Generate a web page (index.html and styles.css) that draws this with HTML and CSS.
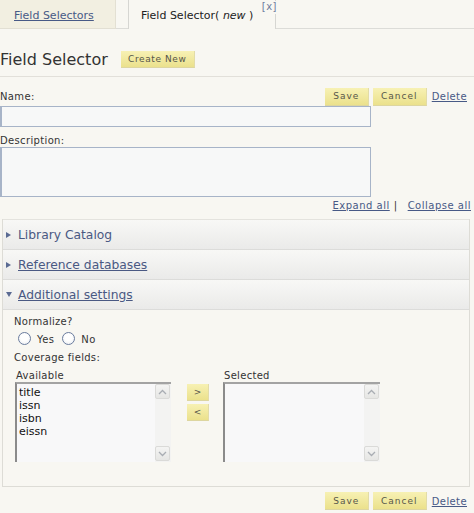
FILE: index.html
```html
<!DOCTYPE html>
<html>
<head>
<meta charset="utf-8">
<title>Field Selector</title>
<link rel="stylesheet" href="styles.css">
</head>
<body>
<div class="tabs">
  <div class="tab tab-off"><a href="#">Field Selectors</a></div>
  <div class="tab-gap"></div>
  <div class="tab tab-on">Field Selector( <i>new</i> )<span class="close">[x]</span></div>
  <div class="tab-rest"></div>
</div>

<div class="title-row">
  <h1>Field Selector</h1>
  <button class="btn btn-create">Create New</button>
</div>
<div class="rule"></div>

<div class="label-row">
  <label class="lbl">Name:</label>
  <div class="actions">
    <button class="btn btn-save">Save</button>
    <button class="btn btn-cancel">Cancel</button>
    <a href="#" class="del">Delete</a>
  </div>
</div>
<input class="text-input" type="text">

<label class="lbl desc-label">Description:</label>
<textarea class="text-area"></textarea>

<div class="expand">
  <a href="#">Expand all</a><span class="sep">|</span><a href="#">Collapse all</a>
</div>

<div class="accordion">
  <div class="acc-head"><span class="tri-r"></span><span class="acc-title">Library Catalog</span></div>
  <div class="acc-head"><span class="tri-r"></span><a href="#" class="acc-title">Reference databases</a></div>
  <div class="acc-head"><span class="tri-d"></span><a href="#" class="acc-title">Additional settings</a></div>
  <div class="acc-body">
    <div class="small-lbl">Normalize?</div>
    <div class="radios">
      <span class="radio"></span><span class="radio-lbl">Yes</span>
      <span class="radio"></span><span class="radio-lbl">No</span>
    </div>
    <div class="small-lbl cov">Coverage fields:</div>
    <div class="pickers">
      <div class="pick-col col-avail">
        <div class="small-lbl pick-lbl">Available</div>
        <div class="listbox">
          <ul class="items">
            <li>title</li>
            <li>issn</li>
            <li>isbn</li>
            <li>eissn</li>
          </ul>
          <div class="scrollbar">
            <span class="sb-btn"><svg width="9" height="6" viewBox="0 0 9 6"><path d="M1 5 L4.5 1.5 L8 5" fill="none" stroke="#a9adb3" stroke-width="1.3"/></svg></span>
            <span class="sb-btn"><svg width="9" height="6" viewBox="0 0 9 6"><path d="M1 1 L4.5 4.5 L8 1" fill="none" stroke="#a9adb3" stroke-width="1.3"/></svg></span>
          </div>
        </div>
      </div>
      <div class="move-col">
        <button class="btn btn-move">&gt;</button>
        <button class="btn btn-move">&lt;</button>
      </div>
      <div class="pick-col col-sel">
        <div class="small-lbl pick-lbl">Selected</div>
        <div class="listbox">
          <ul class="items"></ul>
          <div class="scrollbar">
            <span class="sb-btn"><svg width="9" height="6" viewBox="0 0 9 6"><path d="M1 5 L4.5 1.5 L8 5" fill="none" stroke="#a9adb3" stroke-width="1.3"/></svg></span>
            <span class="sb-btn"><svg width="9" height="6" viewBox="0 0 9 6"><path d="M1 1 L4.5 4.5 L8 1" fill="none" stroke="#a9adb3" stroke-width="1.3"/></svg></span>
          </div>
        </div>
      </div>
    </div>
  </div>
</div>

<div class="actions bottom-actions">
  <button class="btn btn-save">Save</button>
  <button class="btn btn-cancel">Cancel</button>
  <a href="#" class="del">Delete</a>
</div>
</body>
</html>
```

FILE: styles.css
```css
html, body {
  margin: 0;
  padding: 0;
}
body {
  width: 474px;
  height: 513px;
  overflow: hidden;
  background: #f8f7f2;
  font-family: "DejaVu Sans", Verdana, sans-serif;
  color: #333;
}
a {
  color: #485a86;
  text-decoration: underline;
}

/* tabs */
.tabs {
  display: flex;
  height: 29px;
}
.tab {
  box-sizing: border-box;
  height: 29px;
  padding-top: 9px;
  font-size: 11px;
  line-height: 13px;
  white-space: nowrap;
}
.tab-off {
  width: 116px;
  padding-left: 14px;
  background: #f2efe1;
  border-right: 1px solid #e3e0d3;
  border-bottom: 1px solid #e2dfd3;
}
.tab-gap {
  width: 12px;
  border-bottom: 1px solid #dcdcd8;
}
.tab-on {
  position: relative;
  width: 148px;
  padding-left: 12px;
  color: #222;
  border-left: 1px solid #d6d6d2;
  border-right: 1px solid #d6d6d2;
}
.tab-on i {
  font-style: italic;
}
.close {
  position: absolute;
  top: 1px;
  right: -3px;
  padding: 0 1px 2px;
  background: #f8f7f2;
  font-size: 10px;
  line-height: 11px;
  letter-spacing: 0.5px;
  color: #6f7e9e;
}
.tab-rest {
  flex: 1;
  border-bottom: 1px solid #dcdcd8;
}

/* title */
.title-row {
  display: flex;
  align-items: center;
  height: 21px;
  margin-top: 20px;
}
h1 {
  margin: 0;
  font-size: 16px;
  font-weight: normal;
  color: #333;
  line-height: 21px;
}
.rule {
  margin-top: 6px;
  height: 1px;
  background: #e2e0da;
}

/* buttons */
.btn {
  box-sizing: border-box;
  height: 18px;
  padding: 0;
  margin: 0;
  border: none;
  border-right: 1px solid #e2dca8;
  border-bottom: 1px solid #ddd6a0;
  background: linear-gradient(#f7f1b4, #ebe18c);
  font-family: "DejaVu Sans", Verdana, sans-serif;
  font-size: 9px;
  letter-spacing: 1px;
  color: #56564a;
  line-height: 16px;
}
.btn-create {
  width: 74px;
  height: 17px;
  margin-left: 13px;
  letter-spacing: 0.6px;
}
.btn-save { width: 44px; }
.btn-cancel { width: 54px; margin-left: 4px; }

.actions {
  display: flex;
  align-items: center;
  justify-content: flex-end;
  margin-left: auto;
  padding-right: 7px;
}
.del {
  margin-left: 5px;
  font-size: 10px;
  letter-spacing: 0.4px;
}

/* form */
.label-row {
  display: flex;
  align-items: center;
  height: 19px;
  margin-top: 10px;
}
.lbl {
  font-size: 10px;
  letter-spacing: 0.35px;
  color: #333;
}
.text-input {
  display: block;
  box-sizing: border-box;
  width: 371px;
  height: 21px;
  margin: 0;
  padding: 0 3px;
  border: 1px solid #a7b4c8;
  border-left: 2px solid #a7b4c8;
  background: #f7f8f8;
}
.desc-label {
  display: block;
  box-sizing: border-box;
  height: 20px;
  padding-top: 7px;
  line-height: 13px;
}
.text-area {
  display: block;
  box-sizing: border-box;
  width: 371px;
  height: 50px;
  margin: 0;
  padding: 2px;
  resize: none;
  border: 1px solid #a7b4c8;
  border-left: 2px solid #a7b4c8;
  background: #f7f8f8;
}
.expand {
  display: flex;
  justify-content: flex-end;
  align-items: center;
  height: 16px;
  padding-right: 3px;
  font-size: 10px;
  letter-spacing: 0.5px;
}
.sep {
  margin: 0 10px 0 4px;
  color: #333;
}

/* accordion */
.accordion {
  margin: 6px 4px 0 2px;
  border: 1px solid #dddcd6;
  border-top: none;
}
.acc-head {
  display: flex;
  align-items: center;
  box-sizing: border-box;
  height: 30px;
  padding-left: 3px;
  border-top: 1px solid #dcdcda;
  background: linear-gradient(#f8f8f6, #eaeae9);
  font-size: 12.3px;
}
.acc-head:first-child {
  border-top: 1px solid #e4e3de;
}
.acc-title {
  color: #4a5983;
}
.tri-r {
  width: 0;
  height: 0;
  margin-right: 7px;
  border-top: 3.5px solid transparent;
  border-bottom: 3.5px solid transparent;
  border-left: 5px solid #5a6a92;
}
.tri-d {
  width: 0;
  height: 0;
  margin-right: 6px;
  border-left: 3.5px solid transparent;
  border-right: 3.5px solid transparent;
  border-top: 5px solid #5a6a92;
}
.acc-body {
  border-top: 1px solid #dcdcda;
  padding: 6px 0 24px 11px;
  background: #f8f7f2;
}
.small-lbl {
  font-size: 10px;
  line-height: 12px;
  letter-spacing: 0.3px;
  color: #333;
}
.radios {
  display: flex;
  align-items: center;
  height: 16px;
  margin-top: 2px;
  padding-left: 4px;
}
.radio {
  box-sizing: border-box;
  width: 13px;
  height: 13px;
  border: 1px solid #6a7c9e;
  border-radius: 50%;
  background: radial-gradient(circle at 50% 40%, #ffffff 40%, #e7eaef);
}
.radio-lbl {
  margin-left: 6px;
  margin-right: 8px;
  font-size: 10px;
  letter-spacing: 0.4px;
  padding-top: 3px;
}
.cov {
  margin-top: 6px;
}
.pickers {
  display: flex;
  margin-top: 6px;
  padding-left: 1px;
}
.pick-col {
  display: flex;
  flex-direction: column;
}
.col-avail { width: 156px; }
.col-sel { width: 157px; margin-left: 14px; }
.pick-lbl {
  padding-left: 1px;
}
.listbox {
  display: flex;
  box-sizing: border-box;
  height: 80px;
  border-top: 2px solid #a3a3a3;
  border-left: 2px solid #8b8b8b;
  background: #f8f8f9;
}
.items {
  flex: 1;
  margin: 0;
  padding: 2px 0 0 2px;
  list-style: none;
  font-size: 11px;
  line-height: 13px;
  color: #111;
}
.scrollbar {
  display: flex;
  flex-direction: column;
  justify-content: space-between;
  width: 16px;
  padding-bottom: 1px;
  background: #f3f3f2;
}
.sb-btn {
  display: flex;
  align-items: center;
  justify-content: center;
  box-sizing: border-box;
  width: 15px;
  height: 15px;
  border: 1px solid #dadad8;
  border-radius: 2px;
  background: linear-gradient(#f4f4f3, #e6e6e4);
}
.move-col {
  display: flex;
  flex-direction: column;
  gap: 3px;
  margin-left: 16px;
  padding-top: 14px;
}
.btn-move {
  width: 22px;
  height: 17px;
  letter-spacing: 0;
}

.bottom-actions {
  margin-top: 5px;
  height: 18px;
}
```
